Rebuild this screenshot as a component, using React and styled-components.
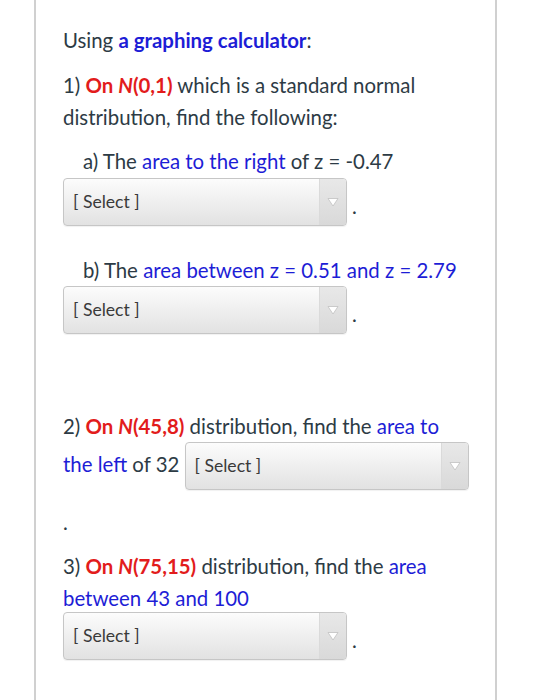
import React from 'react';
import styled, { createGlobalStyle } from 'styled-components';

const GlobalStyle = createGlobalStyle`
    html, body {
        margin: 0;
        padding: 0;
        background: #ffffff;
    }
    body {
        font-family: Lato, "Open Sans", "Liberation Sans", sans-serif;
        color: #2d3b45;
    }
`;

const Panel = styled.div`
    box-sizing: border-box;
    width: 463px;
    min-height: 100vh;
    margin-left: 34px;
    padding: 24px 27px 0 27px;
    border-left: 2px solid #d0d0d0;
    border-right: 2px solid #d0d0d0;
    font-size: 20.4px;
    line-height: 32px;
`;

const Para = styled.p`
    margin: ${props => props.top || 0}px 0 0 ${props => props.indent || 0}px;
`;

const Blue = styled.span`
    color: #1d1dd6;
    font-weight: ${props => (props.bold ? 700 : 400)};
`;

const Red = styled.span`
    color: #e21c1c;
    font-weight: 700;
`;

const Dist = styled.em`
    font-style: italic;
`;

const SelectRow = styled.div`
    display: flex;
    align-items: flex-end;
    margin-top: ${props => props.top || 0}px;
`;

const SelectBox = styled.span`
    display: inline-flex;
    box-sizing: border-box;
    width: 284px;
    height: 48px;
    border: 1px solid #c6c6c6;
    border-radius: 4px;
    background: linear-gradient(#fcfcfc, #e2e2e2);
    box-shadow: 0 1px 1px rgba(0, 0, 0, 0.06);
    vertical-align: baseline;
    margin-bottom: ${props => props.bottom || 0}px;
    margin-right: ${props => props.tuck || 0}px;
    overflow: hidden;
`;

const SelectLabel = styled.span`
    flex: 1;
    padding-left: 9px;
    font-size: 17.6px;
    line-height: 46px;
    color: #3a3a3a;
`;

const ArrowZone = styled.span`
    display: flex;
    align-items: center;
    justify-content: center;
    width: 26px;
    border-left: 1px solid #dadada;
    background: linear-gradient(#e8e8e8, #d9d9d9);
`;

const Dot = styled.span`
    margin: 0 0 10px 5px;
    line-height: 20px;
`;

const DotLine = styled.div`
    line-height: 32px;
`;

function Select({ bottom, tuck }) {
    return (
        <SelectBox bottom={bottom} tuck={tuck}>
            <SelectLabel>[ Select ]</SelectLabel>
            <ArrowZone>
                <svg width="12" height="10" viewBox="0 0 12 10">
                    <polygon points="1,1.5 11,1.5 6,9" fill="#ffffff" stroke="#c0c0c0" strokeWidth="0.8" />
                </svg>
            </ArrowZone>
        </SelectBox>
    );
}

function Answer({ top }) {
    return (
        <SelectRow top={top}>
            <Select />
            <Dot>.</Dot>
        </SelectRow>
    );
}

export default function App() {
    return (
        <>
            <GlobalStyle />
            <Panel>
                <Para>
                    Using <Blue bold>a graphing calculator</Blue>:
                </Para>
                <Para top={13}>
                    1) <Red>On <Dist>N</Dist>(0,1)</Red> which is a standard normal distribution, find the following:
                </Para>
                <Para top={12} indent={20}>
                    a) The <Blue>area to the right</Blue> of z = -0.47
                </Para>
                <Answer top={1} />
                <Para top={28} indent={20}>
                    b) The <Blue>area between z = 0.51 and z = 2.79</Blue>
                </Para>
                <Answer top={0} />
                <Para top={76}>
                    2) <Red>On <Dist>N</Dist>(45,8)</Red> distribution, find the <Blue>area to the left</Blue> of 32{' '}
                    <Select bottom={16} tuck={-20} />
                </Para>
                <DotLine>.</DotLine>
                <Para top={12}>
                    3) <Red>On <Dist>N</Dist>(75,15)</Red> distribution, find the <Blue>area between 43 and 100</Blue>
                </Para>
                <Answer top={-2} />
            </Panel>
        </>
    );
}
